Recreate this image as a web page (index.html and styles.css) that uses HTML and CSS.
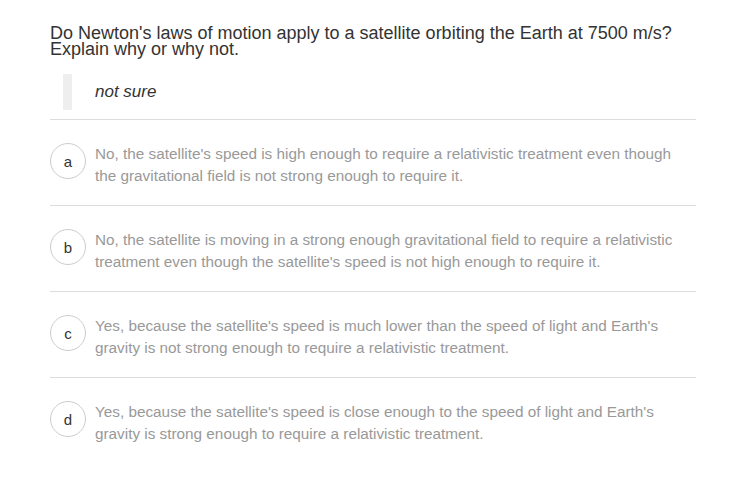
FILE: index.html
```html
<!DOCTYPE html>
<html lang="en">
<head>
  <meta charset="UTF-8">
  <title>Question</title>
  <link rel="stylesheet" href="styles.css">
</head>
<body>
  <div class="quiz">
    <h2 class="question">Do Newton's laws of motion apply to a satellite orbiting the Earth at 7500 m/s? Explain why or why not.</h2>

    <blockquote class="answer">not sure</blockquote>

    <ul class="options">
      <li class="option">
        <span class="letter">a</span>
        <p>No, the satellite's speed is high enough to require a relativistic treatment even though the gravitational field is not strong enough to require it.</p>
      </li>
      <li class="option">
        <span class="letter">b</span>
        <p>No, the satellite is moving in a strong enough gravitational field to require a relativistic treatment even though the satellite's speed is not high enough to require it.</p>
      </li>
      <li class="option">
        <span class="letter">c</span>
        <p>Yes, because the satellite's speed is much lower than the speed of light and Earth's gravity is not strong enough to require a relativistic treatment.</p>
      </li>
      <li class="option">
        <span class="letter">d</span>
        <p>Yes, because the satellite's speed is close enough to the speed of light and Earth's gravity is strong enough to require a relativistic treatment.</p>
      </li>
    </ul>
  </div>
</body>
</html>
```

FILE: styles.css
```css
* {
  box-sizing: border-box;
}

body {
  margin: 0;
  background-color: #fff;
  font-family: 'Liberation Sans', Arial, sans-serif;
}

.quiz {
  width: 696px;
  padding: 25px 0 0 50px;
}

.question {
  margin: 0;
  font-size: 18px;
  font-weight: normal;
  line-height: 16px;
  color: #333;
}

.answer {
  margin: 17px 0 0 13px;
  height: 36px;
  padding-left: 23px;
  border-left: 9px solid #eee;
  font-size: 17px;
  font-style: italic;
  line-height: 36px;
  color: #333;
}

.options {
  list-style: none;
  margin: 9px 0 0;
  padding: 0;
  border-top: 1px solid #ddd;
}

.option {
  display: flex;
  gap: 9px;
  padding: 23px 0 18px;
  border-bottom: 1px solid #ddd;
}

.option:last-child {
  border-bottom: none;
}

.letter {
  flex: none;
  width: 36px;
  height: 36px;
  border: 1px solid #ccc;
  border-radius: 50%;
  display: flex;
  justify-content: center;
  align-items: center;
  font-size: 15px;
  color: #333;
}

.option p {
  max-width: 590px;
  margin: 0;
  font-size: 15.3px;
  line-height: 22px;
  color: #999;
}
```
